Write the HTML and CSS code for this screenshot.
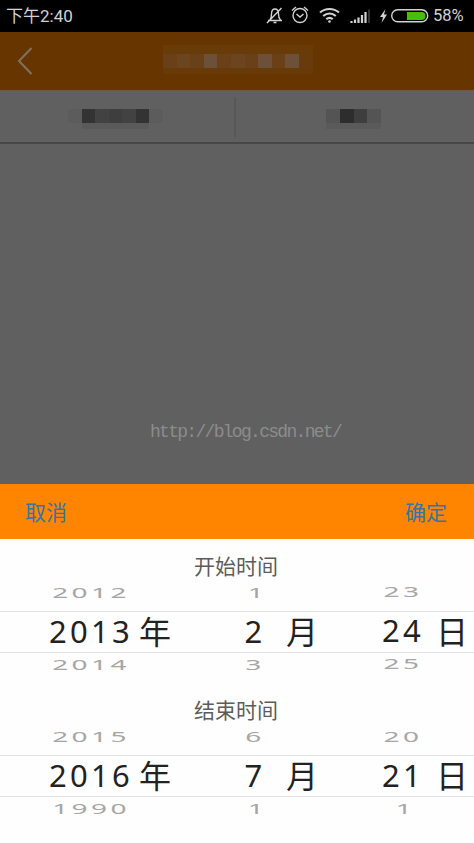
FILE: index.html
```html
<!DOCTYPE html>
<html lang="zh-CN">
<head>
    <meta charset="UTF-8">
    <meta name="viewport" content="width=device-width, initial-scale=1.0">
    <title>选择时间</title>
    <link rel="stylesheet" href="styles.css">
</head>
<body>
    <div class="statusbar">
        <span class="clock">下午2:40</span>
        <svg class="icons" width="166" height="32" viewBox="264 0 166 32" fill="none" stroke="#d2d2d2" stroke-width="1.4">
            <!-- muted bell -->
            <path d="M268 20.500h14M270 20c1.500-2 1.500-4 1.500-6 0-3 1.500-5 3.500-5s3.500 2 3.500 5 0 4 2 6M273.500 22.500h3M267 23l14.500-15"/>
            <!-- alarm -->
            <circle cx="300" cy="15.500" r="7"/>
            <path d="M296.500 14l3.500 3 3.500-3M292 10.500l4-3.500M308 10.500l-4-3.500"/>
            <!-- wifi -->
            <path stroke-width="2.200" d="M320 12.500c5.500-4.700 13.500-4.700 19 0M323.200 16c3.800-3.200 8.800-3.200 12.600 0M326.300 19.200c2-1.600 4.400-1.600 6.400 0"/>
            <circle cx="329.500" cy="21.500" r="1.300" fill="#d2d2d2" stroke="none"/>
            <!-- signal -->
            <path stroke-width="2.200" d="M351.500 23v-2M355 23v-3.500M358.500 23v-5.500M362 23v-8M365.500 23v-11"/>
            <path stroke="#333" stroke-width="2" d="M369 23v-13.500"/>
            <!-- battery -->
            <path d="M385.500 9l-5.500 8h3l-1.500 6 5.500-8.500h-3z" fill="#d2d2d2" stroke="none"/>
            <rect x="391.700" y="9.700" width="36" height="12" rx="6"/>
            <path d="M407 12h14.500a4 4 0 0 1 0 8H407z" fill="#48bd0b" stroke="none"/>
        </svg>
        <span class="percent">58%</span>
    </div>

    <div class="header">
        <svg class="back" width="18" height="30" viewBox="0 0 18 30" fill="none" stroke="#83715f" stroke-width="2">
            <path d="M14.500 2L2 15l12.500 13"/>
        </svg>
        <div class="mosaic title">
            <i class="t2"></i><i class="t3"></i><i class="t2"></i><i class="t5"></i><i class="t2"></i><i class="t3"></i><i class="t2"></i><i class="t5"></i><i class="t2"></i><i class="t5"></i><i class="t1"></i>
        </div>
    </div>

    <div class="tabs">
        <div class="tab">
            <div class="mosaic">
                <i class="g1"></i><i class="g5"></i><i class="g3"></i><i class="g4"></i><i class="g3"></i><i class="g5"></i><i class="g1"></i>
            </div>
        </div>
        <div class="tab">
            <div class="mosaic">
                <i class="g2"></i><i class="g6"></i><i class="g4"></i><i class="g2"></i>
            </div>
        </div>
    </div>

    <div class="content">
        <span class="watermark">http://blog.csdn.net/</span>
    </div>

    <div class="sheet">
        <div class="toolbar">
            <span>取消</span>
            <span>确定</span>
        </div>

        <div class="picker">
            <div class="label">开始时间</div>
            <div class="wheels">
                <div class="wheel year"><span class="near">2012</span><span class="current">2013</span><span class="near">2014</span></div>
                <div class="unit">年</div>
                <div class="wheel month"><span class="near one">1</span><span class="current">2</span><span class="near">3</span></div>
                <div class="unit">月</div>
                <div class="wheel day raised"><span class="near">23</span><span class="current">24</span><span class="near">25</span></div>
                <div class="unit">日</div>
            </div>
        </div>

        <div class="picker">
            <div class="label">结束时间</div>
            <div class="wheels">
                <div class="wheel year"><span class="near">2015</span><span class="current">2016</span><span class="near">1990</span></div>
                <div class="unit">年</div>
                <div class="wheel month"><span class="near">6</span><span class="current">7</span><span class="near one">1</span></div>
                <div class="unit">月</div>
                <div class="wheel day"><span class="near">20</span><span class="current">21</span><span class="near one">1</span></div>
                <div class="unit">日</div>
            </div>
        </div>
    </div>
</body>
</html>
```
FILE: styles.css
```css
*{
    box-sizing: border-box;
}
body{
    margin:0;
    height:843px;
    display: flex;
    flex-direction: column;
    overflow: hidden;
    background-color: #606060;
    font-family: "Noto Sans", "Noto Sans CJK SC", sans-serif;
}

.statusbar{
    height:32px;
    flex:none;
    display: flex;
    align-items: center;
    padding: 0 9px 0 6px;
    background-color: #000;
    color:#d2d2d2;
    font-family: Roboto, "Noto Sans CJK SC", sans-serif;
    font-size: 17px;
    line-height: 32px;
    white-space: nowrap;
}
.icons{
    margin-left: auto;
    margin-right: 3px;
}
.percent{
    width:32px;
    font-size: 16.500px;
}

.header{
    height:58px;
    flex:none;
    display: flex;
    align-items: center;
    padding-left: 17px;
    background-color: #663500;
}
.title{
    margin-left: 128px;
}
.title i{
    box-shadow: 0 -9px #683b09, 0 6px #683a07;
}
.mosaic{
    display: flex;
}
.mosaic i{
    width:13.6px;
    height:14px;
}
.t1{ background-color: #693b0c; }
.t2{ background-color: #694018; }
.t3{ background-color: #6a4520; }
.t5{ background-color: #6d5038; }

.tabs{
    height:54px;
    flex:none;
    display: flex;
    align-items: center;
    border-top: 1px solid #6b5a48;
    border-bottom: 2px solid #474747;
}
.tab{
    height:40px;
    flex:1;
    display: flex;
    justify-content: center;
    align-items: center;
    padding: 0 3px 2px 0;
}
.tab:first-child{
    flex:none;
    width:236px;
    border-right: 2px solid #575757;
}
.tab i{
    box-shadow: 0 6px #5a5a5a;
}
.tab .g1{
    background-color: #5c5c5c;
    box-shadow: none;
}
.g2{ background-color: #545454; }
.g3{ background-color: #424242; }
.g4{ background-color: #3e3e3e; }
.g5{ background-color: #333; }
.g6{ background-color: #2d2d2d; }

.content{
    flex:1;
    display: flex;
    justify-content: center;
    align-items: flex-end;
    padding: 0 0 40px 17px;
}
.watermark{
    color:#8c8c8c;
    font-family: "Liberation Mono", monospace;
    font-size: 18px;
    line-height: 24px;
    letter-spacing: -1.700px;
}

.sheet{
    height:359px;
    flex:none;
    background-color: #fefefe;
}
.toolbar{
    height:55px;
    display: flex;
    justify-content: space-between;
    align-items: center;
    padding: 0 27px 2px 25px;
    background-color: #ff8500;
    color:#3974a4;
    font-size: 21px;
}
.picker{
    height:144px;
    padding-top: 13px;
}
.label{
    height:30px;
    padding-right: 2px;
    text-align: center;
    font-size: 21px;
    line-height: 29px;
    color:#5c5c5c;
}
.wheels{
    height:100px;
    display: flex;
    align-items: center;
    padding-left: 43px;
    /* separators above and below the selected row */
    background: linear-gradient(#e2e2e2, #e2e2e2) 0 29px / 100% 1px no-repeat,
                linear-gradient(#e2e2e2, #e2e2e2) 0 70px / 100% 1px no-repeat;
}
.wheel{
    height:100px;
    display: flex;
    flex-direction: column;
    align-items: center;
}
.year{
    width:96px;
}
.month{
    width:62px;
    margin-left: 53px;
}
.day{
    width:70px;
    margin-left: 50px;
    margin-right: -2px;
}
.raised{
    padding-bottom: 2px;
    margin-top: -2px;
}
.near{
    height:29px;
    line-height: 29px;
    font-size: 28px;
    letter-spacing: 3.400px;
    color:#a6a6a6;
    transform: scaleY(0.5);
}
.near:first-child{
    margin-top: -4px;
}
.one{
    padding-left: 5px;
}
.current{
    height:43px;
    line-height: 48px;
    font-size: 31px;
    letter-spacing: 3.300px;
    color:#222;
}
.unit{
    width:32px;
    padding-bottom: 2px;
    font-size: 32px;
    line-height: 41px;
    color:#222;
}
```
